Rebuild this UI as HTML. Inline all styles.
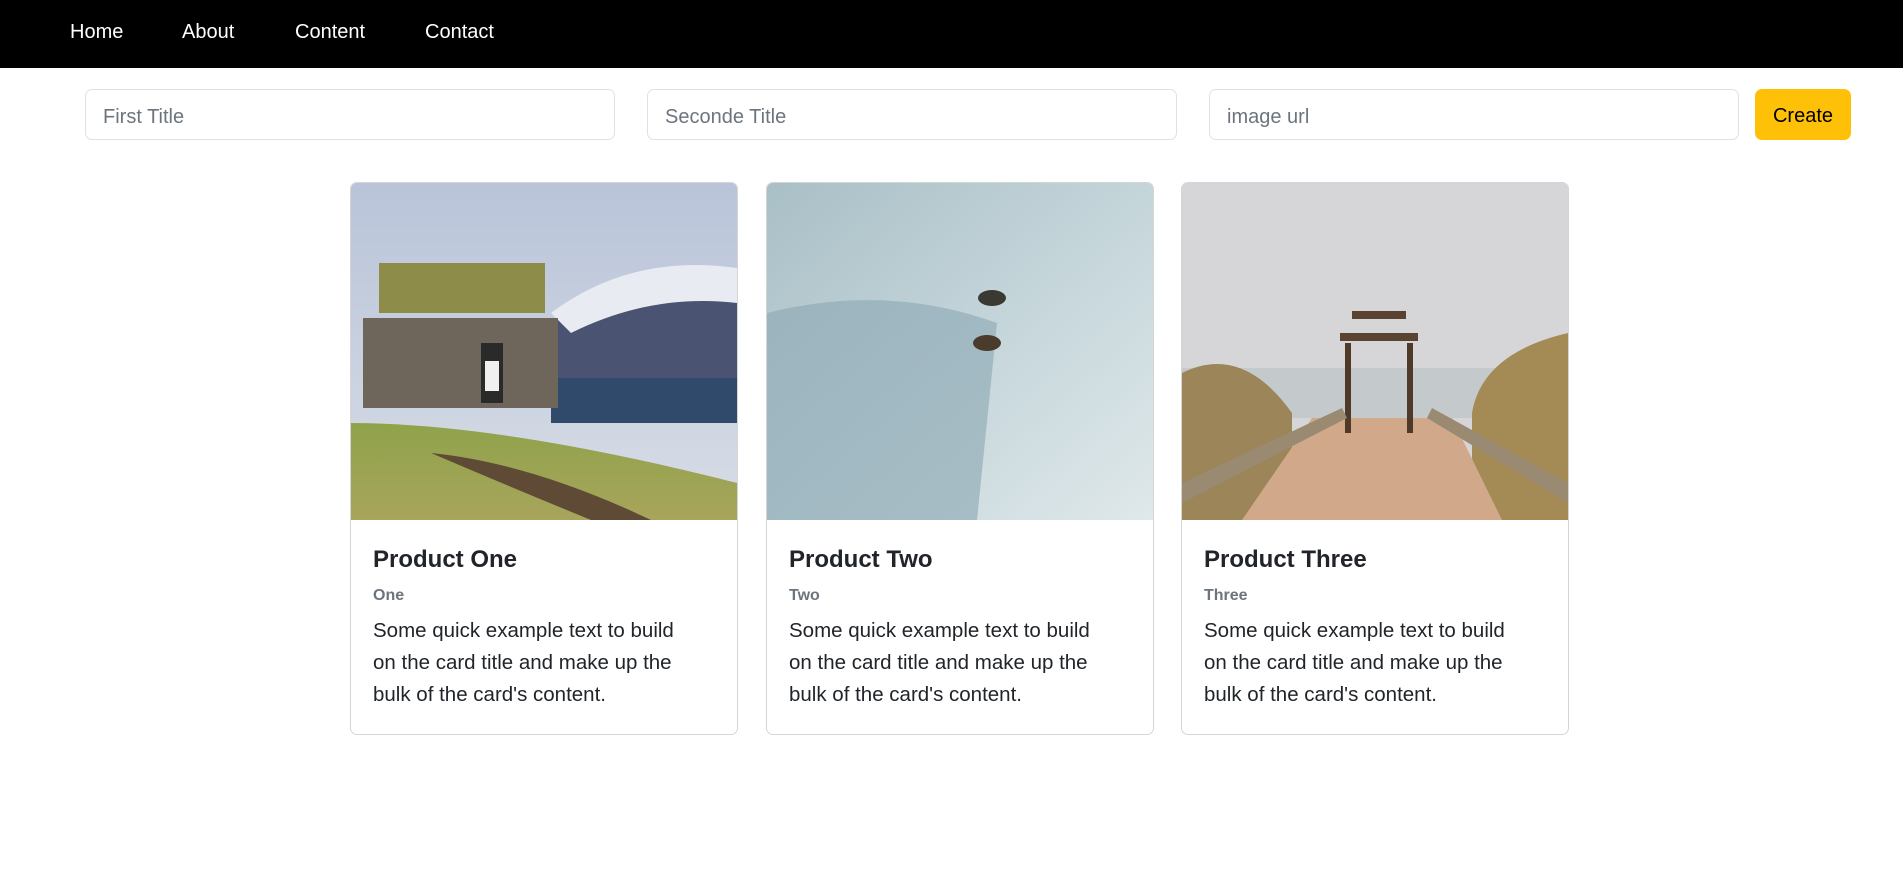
<!DOCTYPE html>
<html><head><meta charset="utf-8"><style>
*{box-sizing:border-box;margin:0;padding:0}
body{width:1903px;height:882px;background:#fff;font-family:"Segoe UI","Liberation Sans",sans-serif;color:#212529;position:relative;overflow:hidden}
nav{position:absolute;left:0;top:0;width:1903px;height:68px;background:#000}
nav a{position:absolute;top:21px;color:#fff;font-size:20px;text-decoration:none}
.in{position:absolute;top:89px;height:51px;border:1px solid #dee2e6;border-radius:7px;font-size:20px;color:#6c757d;padding:15px 17px;line-height:25px}
.btn{position:absolute;left:1755px;top:89px;width:96px;height:51px;background:#ffc107;border-radius:7px;font-size:20px;color:#000;text-align:center;line-height:55px}
.card{position:absolute;top:182px;width:388px;height:553px;border:1px solid #d5d5d5;border-radius:7px;overflow:hidden}
.card svg{display:block;width:386px;height:337px}
.body{padding:0 22px}
h5{font-size:24px;font-weight:600;margin-top:25px;line-height:30px}
h6{font-size:16px;font-weight:600;color:#6c757d;margin-top:11px;line-height:20px}
p{font-size:20.5px;line-height:32px;margin-top:9px;white-space:nowrap}
</style></head><body>
<nav><a style="left:70px">Home</a><a style="left:182px">About</a><a style="left:295px">Content</a><a style="left:425px">Contact</a></nav>
<div class="in" style="left:85px;width:530px">First Title</div>
<div class="in" style="left:647px;width:530px">Seconde Title</div>
<div class="in" style="left:1209px;width:530px">image url</div>
<div class="btn">Create</div>

<div class="card" style="left:350px">
<svg viewBox="0 0 386 337" preserveAspectRatio="none">
<defs><linearGradient id="s1" x1="0" y1="0" x2="0" y2="1"><stop offset="0" stop-color="#b9c4d9"/><stop offset="1" stop-color="#d8dde6"/></linearGradient>
<linearGradient id="g1" x1="0" y1="0" x2="0" y2="1"><stop offset="0" stop-color="#8fa34a"/><stop offset="1" stop-color="#a8a45c"/></linearGradient></defs>
<rect width="386" height="337" fill="url(#s1)"/>
<path d="M200 140 Q290 90 386 90 L386 200 L200 200Z" fill="#4a5372"/>
<path d="M200 130 Q280 70 386 85 L386 120 Q300 110 220 150Z" fill="#e8ecf2"/>
<rect x="200" y="195" width="186" height="45" fill="#2f4a6a"/>
<path d="M0 240 Q150 240 386 300 L386 337 L0 337Z" fill="url(#g1)"/>
<path d="M80 270 Q180 280 300 337 L240 337 Q150 300 80 270Z" fill="#5e4a35"/>
<rect x="28" y="80" width="166" height="50" fill="#8d8c48"/>
<rect x="12" y="135" width="195" height="90" fill="#6e665a"/>
<rect x="130" y="160" width="22" height="60" fill="#2a2a2a"/>
<rect x="134" y="178" width="14" height="30" fill="#f0f0f0"/>
</svg>
<div class="body"><h5>Product One</h5><h6>One</h6><p>Some quick example text to build<br>on the card title and make up the<br>bulk of the card's content.</p></div></div>

<div class="card" style="left:766px">
<svg viewBox="0 0 386 337" preserveAspectRatio="none">
<defs><linearGradient id="w2" x1="0" y1="0" x2="1" y2="1"><stop offset="0" stop-color="#a9bfc6"/><stop offset=".5" stop-color="#c4d5da"/><stop offset="1" stop-color="#dfe8ea"/></linearGradient></defs>
<rect width="386" height="337" fill="url(#w2)"/>
<path d="M0 130 Q120 100 230 140 L210 337 L0 337Z" fill="#8aa7b2" opacity=".6"/>
<ellipse cx="225" cy="115" rx="14" ry="8" fill="#3b3a32"/>
<ellipse cx="220" cy="160" rx="14" ry="8" fill="#4a3b2c"/>
</svg>
<div class="body"><h5>Product Two</h5><h6>Two</h6><p>Some quick example text to build<br>on the card title and make up the<br>bulk of the card's content.</p></div></div>

<div class="card" style="left:1181px">
<svg viewBox="0 0 386 337" preserveAspectRatio="none">
<rect width="386" height="337" fill="#d6d6d8"/>
<rect y="185" width="386" height="50" fill="#c4cacb"/>
<path d="M0 190 Q60 160 110 230 L110 337 L0 337Z" fill="#9b8559"/>
<path d="M386 150 Q300 170 290 230 L290 337 L386 337Z" fill="#a48a55"/>
<path d="M130 235 L270 235 L320 337 L60 337Z" fill="#d1a88a"/>
<rect x="163" y="160" width="6" height="90" fill="#4f3a2a"/><rect x="225" y="160" width="6" height="90" fill="#4f3a2a"/>
<rect x="158" y="150" width="78" height="8" fill="#5a4330"/><rect x="170" y="128" width="54" height="8" fill="#5a4330"/>
<path d="M0 300 L160 225 L165 235 L0 320Z" fill="#9a8a72"/><path d="M386 300 L250 225 L245 235 L386 320Z" fill="#9a8a72"/>
</svg>
<div class="body"><h5>Product Three</h5><h6>Three</h6><p>Some quick example text to build<br>on the card title and make up the<br>bulk of the card's content.</p></div></div>
</body></html>
